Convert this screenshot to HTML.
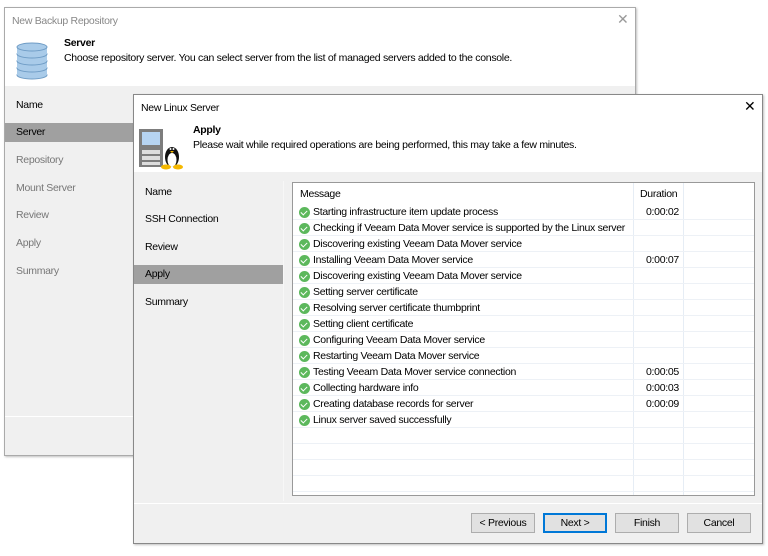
<!DOCTYPE html><html><head><style>
*{margin:0;padding:0;box-sizing:border-box}
body{width:768px;height:556px;background:#fff;position:relative;overflow:hidden;font-family:"Liberation Sans",sans-serif;font-size:10.5px;letter-spacing:-0.3px;color:#000}
.abs{position:absolute}
.win{position:absolute;background:#f0f0f0;border:1px solid #aaa;box-shadow:1px 1px 2px rgba(0,0,0,.25)}
.nav div{position:absolute;left:0;height:19px;line-height:19px;padding-left:11px;width:100%}
.row{position:absolute;left:0;right:0;height:16px;border-bottom:1px solid #edf1f6;line-height:17px}
.ck{position:absolute;left:6px;top:3px;width:11px;height:11px;border-radius:50%;background:#5cb85c}
.ck:after{content:"";position:absolute;left:3px;top:2px;width:3px;height:5px;border:solid #fff;border-width:0 1.5px 1.5px 0;transform:rotate(45deg)}
.msg{position:absolute;left:20px}
.dur{position:absolute;left:353px}
.btn{position:absolute;top:513px;width:64px;height:20px;border:1px solid #adadad;background:#e1e1e1;text-align:center;line-height:18px}
</style></head><body>
<div class="win" style="left:4px;top:7px;width:632px;height:449px">
<div class="abs" style="left:0;top:0;width:630px;height:78px;background:#fff"></div>
<div class="abs" style="left:7px;top:7px;color:#888">New Backup Repository</div>
<div class="abs" style="left:612px;top:3px;color:#999;font-size:14px">✕</div>
<svg class="abs" style="left:11px;top:34px" width="34" height="40"><g fill="#a9cbe9" stroke="#6f9cc5"><ellipse cx="16" cy="33" rx="15" ry="4"/><rect x="1" y="27" width="30" height="6" stroke="none"/><ellipse cx="16" cy="26" rx="15" ry="4"/><rect x="1" y="19" width="30" height="7" stroke="none"/><ellipse cx="16" cy="19" rx="15" ry="4"/><rect x="1" y="12" width="30" height="7" stroke="none"/><ellipse cx="16" cy="12" rx="15" ry="4"/><rect x="1" y="5" width="30" height="7" stroke="none"/><ellipse cx="16" cy="5" rx="15" ry="4"/></g></svg>
<div class="abs" style="left:59px;top:29px;font-weight:bold">Server</div>
<div class="abs" style="left:59px;top:44px">Choose repository server. You can select server from the list of managed servers added to the console.</div>
<div class="nav abs" style="left:0;top:78px;width:150px;height:330px">
<div style="top:10px">Name</div>
<div style="top:37px;background:#a0a0a0">Server</div>
<div style="top:65px;color:#777">Repository</div>
<div style="top:93px;color:#777">Mount Server</div>
<div style="top:120px;color:#777">Review</div>
<div style="top:148px;color:#777">Apply</div>
<div style="top:176px;color:#777">Summary</div>
</div>
<div class="abs" style="left:0;top:408px;width:630px;height:1px;background:#fff"></div>
</div>
<div class="win" style="left:133px;top:94px;width:630px;height:450px;border-color:#888">
<div class="abs" style="left:0;top:0;width:628px;height:77px;background:#fff"></div>
<div class="abs" style="left:7px;top:7px">New Linux Server</div>
<div class="abs" style="left:610px;top:3px;font-size:14px">✕</div>
<svg class="abs" style="left:5px;top:34px" width="46" height="42"><rect x="0" y="0" width="24" height="38" fill="#7d7d7d"/><rect x="3" y="3" width="18" height="13" fill="#b6d4f2"/><rect x="3" y="21" width="18" height="4" fill="#ddd"/><rect x="3" y="27" width="18" height="4" fill="#ddd"/><rect x="3" y="33" width="18" height="3" fill="#ddd"/><ellipse cx="33" cy="28" rx="7" ry="10" fill="#111"/><ellipse cx="33" cy="31" rx="4.5" ry="7" fill="#fff"/><circle cx="31.5" cy="20" r="1" fill="#fff"/><circle cx="34.5" cy="20" r="1" fill="#fff"/><path d="M31 22h4l-2 2z" fill="#f5b800"/><ellipse cx="27" cy="38" rx="5" ry="2.5" fill="#f5b800"/><ellipse cx="39" cy="38" rx="5" ry="2.5" fill="#f5b800"/></svg>
<div class="abs" style="left:59px;top:29px;font-weight:bold">Apply</div>
<div class="abs" style="left:59px;top:44px">Please wait while required operations are being performed, this may take a few minutes.</div>
<div class="nav abs" style="left:0;top:86px;width:150px;height:320px;border-right:1px solid #f7f7f7">
<div style="top:2px">Name</div>
<div style="top:29px">SSH Connection</div>
<div style="top:57px">Review</div>
<div style="top:84px;background:#a0a0a0">Apply</div>
<div style="top:112px">Summary</div>
</div>
<div class="abs" style="left:158px;top:87px;width:463px;height:314px;background:#fff;border:1px solid #999">
<div class="abs" style="left:340px;top:0;width:1px;height:312px;background:#e6edf5"></div>
<div class="abs" style="left:390px;top:0;width:1px;height:312px;background:#e6edf5"></div>
<div class="abs" style="left:7px;top:5px">Message</div>
<div class="abs" style="left:347px;top:5px">Duration</div>
<div class="abs" style="left:0;right:0;top:21px;height:291px">
<div class="row" style="top:0"><i class="ck"></i><span class="msg">Starting infrastructure item update process</span><span class="dur">0:00:02</span></div>
<div class="row" style="top:16px"><i class="ck"></i><span class="msg">Checking if Veeam Data Mover service is supported by the Linux server</span></div>
<div class="row" style="top:32px"><i class="ck"></i><span class="msg">Discovering existing Veeam Data Mover service</span></div>
<div class="row" style="top:48px"><i class="ck"></i><span class="msg">Installing Veeam Data Mover service</span><span class="dur">0:00:07</span></div>
<div class="row" style="top:64px"><i class="ck"></i><span class="msg">Discovering existing Veeam Data Mover service</span></div>
<div class="row" style="top:80px"><i class="ck"></i><span class="msg">Setting server certificate</span></div>
<div class="row" style="top:96px"><i class="ck"></i><span class="msg">Resolving server certificate thumbprint</span></div>
<div class="row" style="top:112px"><i class="ck"></i><span class="msg">Setting client certificate</span></div>
<div class="row" style="top:128px"><i class="ck"></i><span class="msg">Configuring Veeam Data Mover service</span></div>
<div class="row" style="top:144px"><i class="ck"></i><span class="msg">Restarting Veeam Data Mover service</span></div>
<div class="row" style="top:160px"><i class="ck"></i><span class="msg">Testing Veeam Data Mover service connection</span><span class="dur">0:00:05</span></div>
<div class="row" style="top:176px"><i class="ck"></i><span class="msg">Collecting hardware info</span><span class="dur">0:00:03</span></div>
<div class="row" style="top:192px"><i class="ck"></i><span class="msg">Creating database records for server</span><span class="dur">0:00:09</span></div>
<div class="row" style="top:208px"><i class="ck"></i><span class="msg">Linux server saved successfully</span></div>
<div class="row" style="top:224px"></div><div class="row" style="top:240px"></div><div class="row" style="top:256px"></div><div class="row" style="top:272px"></div>
</div>
</div>
<div class="abs" style="left:0;top:408px;width:628px;height:1px;background:#fff"></div>
</div>
<div class="btn" style="left:471px">&lt; Previous</div>
<div class="btn" style="left:543px;border:1px solid #0078d7;box-shadow:inset 0 0 0 1px #0078d7">Next &gt;</div>
<div class="btn" style="left:615px">Finish</div>
<div class="btn" style="left:687px">Cancel</div>
</body></html>
